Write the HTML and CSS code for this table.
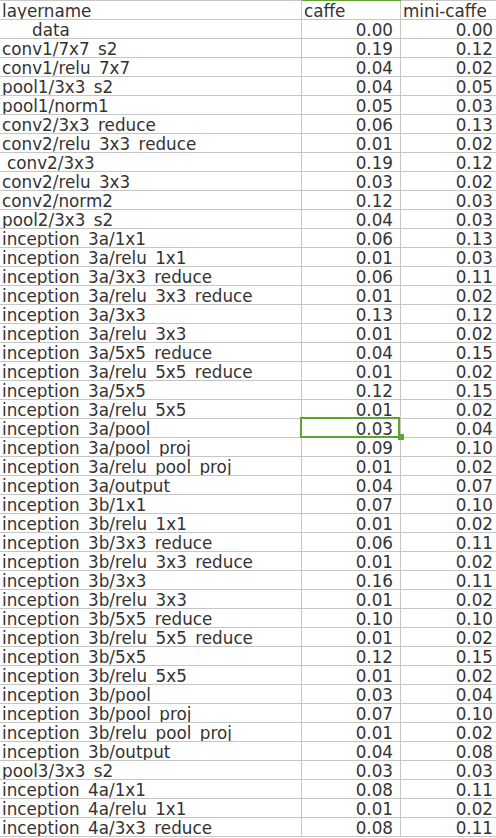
FILE: index.html
```html
<!DOCTYPE html>
<html>
<head>
<meta charset="utf-8">
<link rel="stylesheet" href="styles.css">
</head>
<body>
<div class="sheet">
  <div class="row head"><div class="cell"></div><div class="cell sel-col"></div><div class="cell"></div></div>
  <div class="row"><div class="cell">layername</div><div class="cell">caffe</div><div class="cell">mini-caffe</div></div>
  <div class="row"><div class="cell indent">data</div><div class="cell num">0.00</div><div class="cell num">0.00</div></div>
  <div class="row"><div class="cell">conv1/7x7_s2</div><div class="cell num">0.19</div><div class="cell num">0.12</div></div>
  <div class="row"><div class="cell">conv1/relu_7x7</div><div class="cell num">0.04</div><div class="cell num">0.02</div></div>
  <div class="row"><div class="cell">pool1/3x3_s2</div><div class="cell num">0.04</div><div class="cell num">0.05</div></div>
  <div class="row"><div class="cell">pool1/norm1</div><div class="cell num">0.05</div><div class="cell num">0.03</div></div>
  <div class="row"><div class="cell">conv2/3x3_reduce</div><div class="cell num">0.06</div><div class="cell num">0.13</div></div>
  <div class="row"><div class="cell">conv2/relu_3x3_reduce</div><div class="cell num">0.01</div><div class="cell num">0.02</div></div>
  <div class="row"><div class="cell lead">conv2/3x3</div><div class="cell num">0.19</div><div class="cell num">0.12</div></div>
  <div class="row"><div class="cell">conv2/relu_3x3</div><div class="cell num">0.03</div><div class="cell num">0.02</div></div>
  <div class="row"><div class="cell">conv2/norm2</div><div class="cell num">0.12</div><div class="cell num">0.03</div></div>
  <div class="row"><div class="cell">pool2/3x3_s2</div><div class="cell num">0.04</div><div class="cell num">0.03</div></div>
  <div class="row"><div class="cell">inception_3a/1x1</div><div class="cell num">0.06</div><div class="cell num">0.13</div></div>
  <div class="row"><div class="cell">inception_3a/relu_1x1</div><div class="cell num">0.01</div><div class="cell num">0.03</div></div>
  <div class="row"><div class="cell">inception_3a/3x3_reduce</div><div class="cell num">0.06</div><div class="cell num">0.11</div></div>
  <div class="row"><div class="cell">inception_3a/relu_3x3_reduce</div><div class="cell num">0.01</div><div class="cell num">0.02</div></div>
  <div class="row"><div class="cell">inception_3a/3x3</div><div class="cell num">0.13</div><div class="cell num">0.12</div></div>
  <div class="row"><div class="cell">inception_3a/relu_3x3</div><div class="cell num">0.01</div><div class="cell num">0.02</div></div>
  <div class="row"><div class="cell">inception_3a/5x5_reduce</div><div class="cell num">0.04</div><div class="cell num">0.15</div></div>
  <div class="row"><div class="cell">inception_3a/relu_5x5_reduce</div><div class="cell num">0.01</div><div class="cell num">0.02</div></div>
  <div class="row"><div class="cell">inception_3a/5x5</div><div class="cell num">0.12</div><div class="cell num">0.15</div></div>
  <div class="row"><div class="cell">inception_3a/relu_5x5</div><div class="cell num">0.01</div><div class="cell num">0.02</div></div>
  <div class="row"><div class="cell">inception_3a/pool</div><div class="cell num selected">0.03</div><div class="cell num">0.04</div></div>
  <div class="row"><div class="cell">inception_3a/pool_proj</div><div class="cell num">0.09</div><div class="cell num">0.10</div></div>
  <div class="row"><div class="cell">inception_3a/relu_pool_proj</div><div class="cell num">0.01</div><div class="cell num">0.02</div></div>
  <div class="row"><div class="cell">inception_3a/output</div><div class="cell num">0.04</div><div class="cell num">0.07</div></div>
  <div class="row"><div class="cell">inception_3b/1x1</div><div class="cell num">0.07</div><div class="cell num">0.10</div></div>
  <div class="row"><div class="cell">inception_3b/relu_1x1</div><div class="cell num">0.01</div><div class="cell num">0.02</div></div>
  <div class="row"><div class="cell">inception_3b/3x3_reduce</div><div class="cell num">0.06</div><div class="cell num">0.11</div></div>
  <div class="row"><div class="cell">inception_3b/relu_3x3_reduce</div><div class="cell num">0.01</div><div class="cell num">0.02</div></div>
  <div class="row"><div class="cell">inception_3b/3x3</div><div class="cell num">0.16</div><div class="cell num">0.11</div></div>
  <div class="row"><div class="cell">inception_3b/relu_3x3</div><div class="cell num">0.01</div><div class="cell num">0.02</div></div>
  <div class="row"><div class="cell">inception_3b/5x5_reduce</div><div class="cell num">0.10</div><div class="cell num">0.10</div></div>
  <div class="row"><div class="cell">inception_3b/relu_5x5_reduce</div><div class="cell num">0.01</div><div class="cell num">0.02</div></div>
  <div class="row"><div class="cell">inception_3b/5x5</div><div class="cell num">0.12</div><div class="cell num">0.15</div></div>
  <div class="row"><div class="cell">inception_3b/relu_5x5</div><div class="cell num">0.01</div><div class="cell num">0.02</div></div>
  <div class="row"><div class="cell">inception_3b/pool</div><div class="cell num">0.03</div><div class="cell num">0.04</div></div>
  <div class="row"><div class="cell">inception_3b/pool_proj</div><div class="cell num">0.07</div><div class="cell num">0.10</div></div>
  <div class="row"><div class="cell">inception_3b/relu_pool_proj</div><div class="cell num">0.01</div><div class="cell num">0.02</div></div>
  <div class="row"><div class="cell">inception_3b/output</div><div class="cell num">0.04</div><div class="cell num">0.08</div></div>
  <div class="row"><div class="cell">pool3/3x3_s2</div><div class="cell num">0.03</div><div class="cell num">0.03</div></div>
  <div class="row"><div class="cell">inception_4a/1x1</div><div class="cell num">0.08</div><div class="cell num">0.11</div></div>
  <div class="row"><div class="cell">inception_4a/relu_1x1</div><div class="cell num">0.01</div><div class="cell num">0.02</div></div>
  <div class="row"><div class="cell">inception_4a/3x3_reduce</div><div class="cell num">0.08</div><div class="cell num">0.11</div></div>
</div>
</body>
</html>
```

FILE: styles.css
```css
html, body {
  margin: 0;
  padding: 0;
  background: #ffffff;
  overflow: hidden;
}

.sheet {
  width: 501px;
  font-family: "DejaVu Sans", sans-serif;
  font-size: 16.8px;
  color: #333333;
}

.row {
  display: grid;
  grid-template-columns: 302px 99px 100px;
  height: 19px;
}

.row.head {
  height: 1px;
}

.cell {
  box-sizing: border-box;
  height: 19px;
  border-right: 1px solid #c6c6c6;
  border-bottom: 1px solid #c6c6c6;
  padding: 1px 2px 0 2px;
  line-height: 18px;
  white-space: pre;
  overflow: hidden;
  position: relative;
}

.row.head .cell {
  height: 1px;
  padding: 0;
  border: none;
  background: #c6c6c6;
}

.row.head .cell.sel-col {
  background: #5ea42f;
}

.cell.indent {
  padding-left: 32px;
}

.cell.lead {
  padding-left: 7px;
}

.cell.num {
  text-align: right;
  padding-right: 7px;
}

.cell.selected {
  overflow: visible;
}

.cell.selected::after {
  content: "";
  position: absolute;
  box-sizing: border-box;
  top: -2px;
  left: -2px;
  right: 0;
  bottom: -1px;
  border: 2px solid #5ea42f;
}

.cell.selected::before {
  content: "";
  position: absolute;
  width: 6px;
  height: 6px;
  right: -4px;
  bottom: -3px;
  background: #5ea42f;
  z-index: 1;
}
```
